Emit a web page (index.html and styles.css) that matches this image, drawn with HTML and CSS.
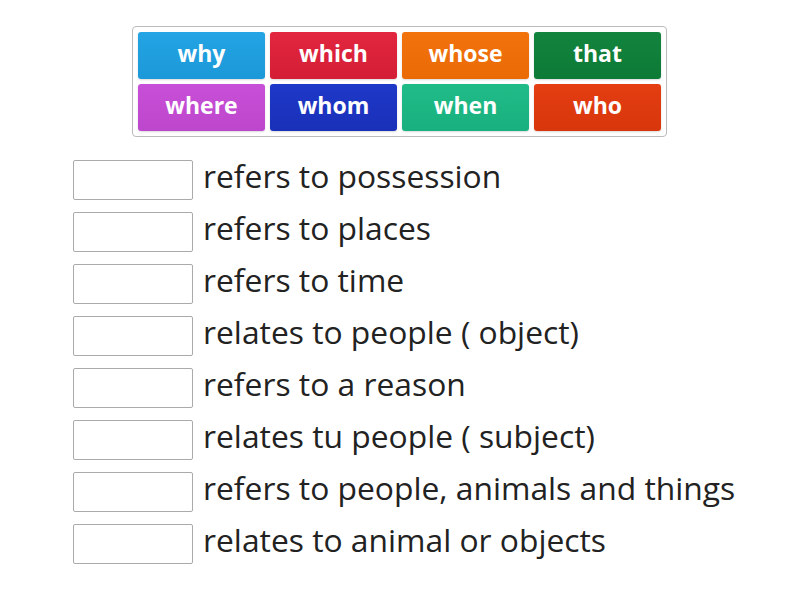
FILE: index.html
```html
<!DOCTYPE html>
<html lang="en">
<head>
  <meta charset="UTF-8">
  <title>Relative pronouns - match up</title>
  <link rel="stylesheet" href="styles.css">
</head>
<body>
  <div id="game">
    <div class="bank">
      <div class="tile why">why</div>
      <div class="tile which">which</div>
      <div class="tile whose">whose</div>
      <div class="tile that">that</div>
      <div class="tile where">where</div>
      <div class="tile whom">whom</div>
      <div class="tile when">when</div>
      <div class="tile who">who</div>
    </div>

    <div class="rows">
      <div class="row"><div class="slot"></div><span class="clue">refers to possession</span></div>
      <div class="row"><div class="slot"></div><span class="clue">refers to places</span></div>
      <div class="row"><div class="slot"></div><span class="clue">refers to time</span></div>
      <div class="row"><div class="slot"></div><span class="clue">relates to people ( object)</span></div>
      <div class="row"><div class="slot"></div><span class="clue">refers to a reason</span></div>
      <div class="row"><div class="slot"></div><span class="clue">relates tu people ( subject)</span></div>
      <div class="row"><div class="slot"></div><span class="clue">refers to people, animals and things</span></div>
      <div class="row"><div class="slot"></div><span class="clue">relates to animal or objects</span></div>
    </div>
  </div>
</body>
</html>
```

FILE: styles.css
```css
body {
  font-family: "Open Sans", Arial, sans-serif;
  background: white;
  margin: 0;
  padding: 0;
}
#game {
  width: 800px;
  padding-top: 26px;
}
.bank {
  display: grid;
  grid-template-columns: repeat(4, 127px);
  grid-auto-rows: 47px;
  gap: 5px;
  width: max-content;
  margin: 0 0 0 132px;
  padding: 5px;
  border: 1px solid #bbb;
  border-radius: 4px;
}
.tile {
  display: flex;
  align-items: center;
  justify-content: center;
  color: white;
  font-size: 23px;
  font-weight: bold;
  border-radius: 3px;
  padding-bottom: 6px;
  box-sizing: border-box;
  box-shadow: 0 1px 2px rgba(0,0,0,0.15);
}
.why   { background: linear-gradient(#24a4e4, #1b98d8); }
.which { background: linear-gradient(#e2263f, #d41e36); }
.whose { background: linear-gradient(#f2720c, #ea6a06); }
.that  { background: linear-gradient(#12843e, #0d7a36); }
.where { background: linear-gradient(#c850d8, #bc46cc); }
.whom  { background: linear-gradient(#1e38c8, #1930b8); }
.when  { background: linear-gradient(#20bc88, #18b07e); }
.who   { background: linear-gradient(#e43e12, #d8360c); }
.rows {
  display: flex;
  flex-direction: column;
  gap: 12px;
  margin: 23px 0 0 73px;
}
.row {
  display: flex;
  align-items: center;
  gap: 10px;
}
.slot {
  width: 120px;
  height: 40px;
  box-sizing: border-box;
  border: 1px solid #aaa;
  border-radius: 2px;
  background: white;
}
.clue {
  font-size: 31.8px;
  color: #222;
  line-height: 40px;
  position: relative;
  top: -4px;
}
```
